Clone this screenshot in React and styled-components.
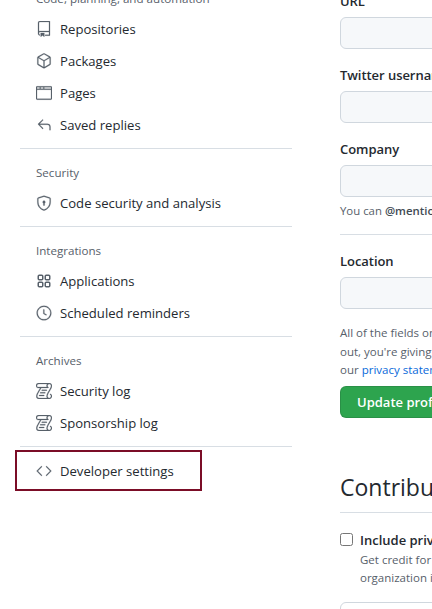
import React from "react";
import styled, { createGlobalStyle } from "styled-components";
import {
  GoRepo,
  GoPackage,
  GoBrowser,
  GoReply,
  GoShieldLock,
  GoClock,
  GoLog,
  GoCode,
} from "react-icons/go";

const GlobalStyle = createGlobalStyle`
  html, body {
    margin: 0;
    padding: 0;
    background: #fff;
    overflow: hidden;
  }
  body {
    font-family: "Open Sans", "Noto Sans", sans-serif;
    color: #24292f;
  }
`;

const AppsIcon = ({ size }) => (
  <svg width={size} height={size} viewBox="0 0 16 16" fill="none" stroke="currentColor" strokeWidth="1.5">
    <rect x="2.25" y="2.25" width="4.5" height="4.5" rx="1" />
    <rect x="9.25" y="2.25" width="4.5" height="4.5" rx="1" />
    <rect x="2.25" y="9.25" width="4.5" height="4.5" rx="1" />
    <rect x="9.25" y="9.25" width="4.5" height="4.5" rx="1" />
  </svg>
);

const sections = [
  {
    title: "Code, planning, and automation",
    items: [
      [GoRepo, "Repositories"],
      [GoPackage, "Packages"],
      [GoBrowser, "Pages"],
      [GoReply, "Saved replies"],
    ],
  },
  { title: "Security", items: [[GoShieldLock, "Code security and analysis"]] },
  {
    title: "Integrations",
    items: [
      [AppsIcon, "Applications"],
      [GoClock, "Scheduled reminders"],
    ],
  },
  {
    title: "Archives",
    items: [
      [GoLog, "Security log"],
      [GoLog, "Sponsorship log"],
    ],
  },
];

const App = () => (
  <Page>
    <GlobalStyle />
    <Sidebar>
      {sections.map((section) => (
        <Section key={section.title}>
          <SectionTitle>{section.title}</SectionTitle>
          {section.items.map(([Icon, label]) => (
            <Row key={label}>
              <Icon size={16} />
              <span>{label}</span>
            </Row>
          ))}
        </Section>
      ))}
      <Highlight>
        <Row>
          <GoCode size={16} />
          <span>Developer settings</span>
        </Row>
      </Highlight>
    </Sidebar>
    <Main>
      <Field>
        <Label>URL</Label>
        <Input />
      </Field>
      <Field>
        <Label>Twitter username</Label>
        <Input />
      </Field>
      <Field>
        <Label>Company</Label>
        <Input />
        <Note>
          You can <Mention>@mention</Mention> your company's GitHub organization
          to link it.
        </Note>
      </Field>
      <Rule />
      <Field $tight>
        <Label>Location</Label>
        <Input />
      </Field>
      <Disclaimer>
        All of the fields on this page are optional and can be deleted at any
        time, and by filling them
        <br />
        out, you're giving us consent to share this data wherever your user
        profile appears. Please see
        <br />
        our <Link>privacy statement</Link> to learn more about how we use this
        information.
      </Disclaimer>
      <Button>Update profile</Button>
      <Heading>Contributions</Heading>
      <CheckRow>
        <Check type="checkbox" />
        <div>
          <CheckLabel>Include private contributions on my profile</CheckLabel>
          <CheckNote>
            Get credit for all your work by showing the number of private
            contributions on your profile
            <br />
            organization information without any action or repository details
          </CheckNote>
        </div>
      </CheckRow>
      <Box />
    </Main>
  </Page>
);
export default App;

const Page = styled.div`
  display: flex;
  align-items: flex-start;
  width: 432px;
  height: 609px;
  overflow: hidden;
  box-sizing: border-box;
  padding-left: 20px;
`;

const Sidebar = styled.nav`
  flex: 0 0 272px;
  margin-top: -11px;
`;

const Section = styled.section`
  padding-bottom: 7px;
  margin-bottom: 14px;
  border-bottom: 1px solid #d8dee4;
`;

const SectionTitle = styled.h3`
  margin: 0 0 4px 16px;
  font-size: 11.6px;
  line-height: 20px;
  font-weight: 500;
  color: #57606a;
`;

const Row = styled.div`
  display: flex;
  align-items: center;
  gap: 8px;
  height: 32px;
  padding-left: 16px;
  font-size: 13.1px;
  color: #24292f;

  svg {
    flex: none;
    color: #57606a;
  }

  svg path {
    stroke: currentColor;
    stroke-width: 0.35;
  }
`;

const Highlight = styled.div`
  box-sizing: border-box;
  width: 187px;
  height: 41px;
  margin: -11px 0 0 -5px;
  padding: 3px 0 0 3px;
  border: 2px solid #7b0d27;
`;

const Main = styled.main`
  flex: 0 0 600px;
  margin-left: 48px;
  margin-top: -9px;
`;

const Field = styled.div`
  margin-bottom: ${(props) => (props.$tight ? "15px" : "16px")};
`;

const Label = styled.label`
  display: block;
  margin-bottom: 6px;
  font-size: 13px;
  line-height: 20px;
  font-weight: 600;
  letter-spacing: -0.05px;
  color: #24292f;
`;

const Input = styled.div`
  box-sizing: border-box;
  height: 32px;
  background: #f6f8fa;
  border: 1px solid #d0d7de;
  border-radius: 6px;
`;

const Note = styled.p`
  margin: 6px 0 0;
  font-size: 11.4px;
  line-height: 15px;
  color: #57606a;
`;

const Mention = styled.strong`
  font-weight: 600;
  color: #424a53;
`;

const Rule = styled.hr`
  margin: 0 0 16px;
  border: 0;
  border-top: 1px solid #d8dee4;
`;

const Disclaimer = styled.p`
  margin: 0 0 6px;
  font-size: 11.5px;
  line-height: 18.5px;
  color: #57606a;
`;

const Link = styled.a`
  color: #0969da;
`;

const Button = styled.button`
  display: block;
  height: 32px;
  padding: 0 16px;
  font-family: inherit;
  font-size: 13px;
  font-weight: 600;
  color: #fff;
  background: #2da44e;
  border: 1px solid rgba(27, 31, 36, 0.15);
  border-radius: 6px;
`;

const Heading = styled.h2`
  margin: 54px 0 16px;
  padding-bottom: 10px;
  font-size: 23px;
  line-height: 30px;
  font-weight: 400;
  color: #24292f;
  border-bottom: 1px solid #d8dee4;
`;

const CheckRow = styled.div`
  display: flex;
  gap: 7px;
  padding-top: 1px;
`;

const Check = styled.input`
  flex: none;
  width: 13px;
  height: 13px;
  margin: 3px 0 0;
`;

const CheckLabel = styled.div`
  font-size: 13px;
  line-height: 20px;
  font-weight: 600;
`;

const CheckNote = styled.div`
  margin-top: 1px;
  font-size: 11.5px;
  line-height: 18px;
  color: #57606a;
`;

const Box = styled.div`
  height: 40px;
  margin-top: 15px;
  border: 1px solid #d0d7de;
  border-radius: 6px;
`;
